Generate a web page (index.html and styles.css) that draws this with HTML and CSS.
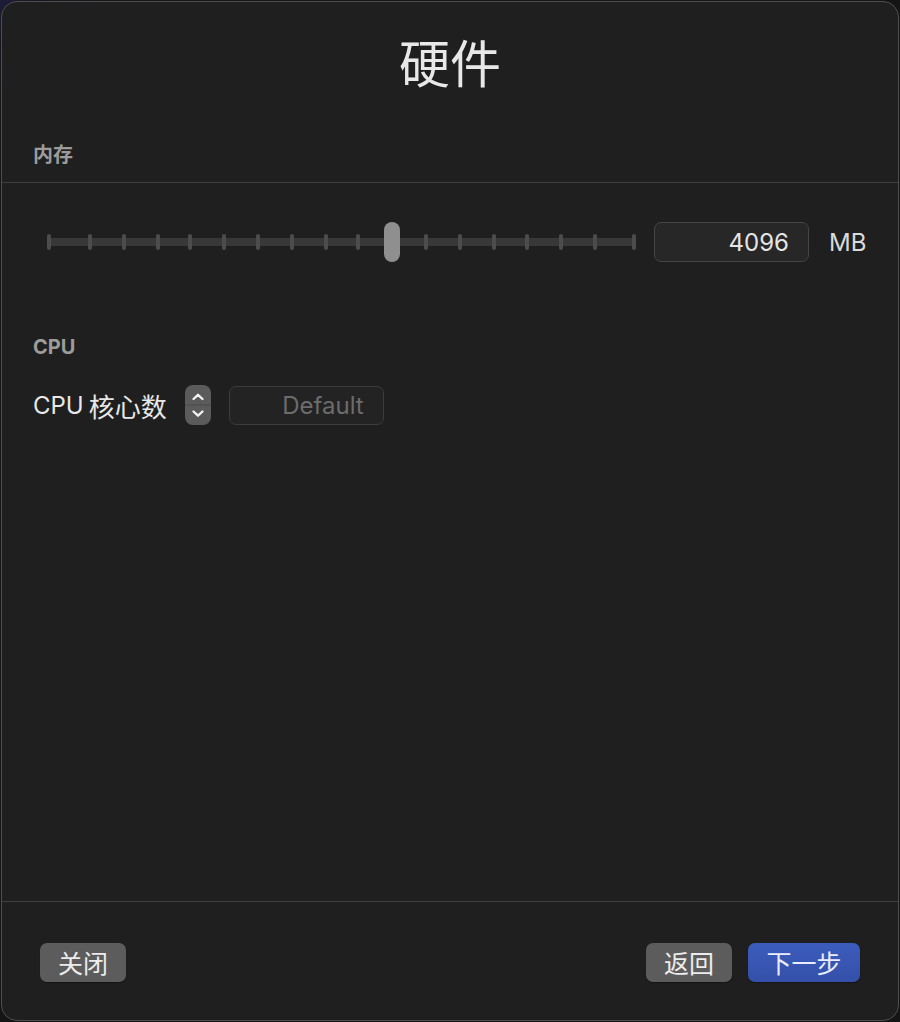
FILE: index.html
```html
<!DOCTYPE html>
<html lang="zh-CN">
<head>
<meta charset="utf-8">
<title>硬件</title>
<link rel="stylesheet" href="styles.css">
</head>
<body>
<div class="window">
  <main class="content">
    <h1 class="title">硬件</h1>

    <div class="section-label">内存</div>
    <div class="divider"></div>

    <div class="memory-row">
      <div class="slider">
        <div class="track"></div>
        <span class="tick" style="left:-1px"></span>
        <span class="tick" style="left:40px"></span>
        <span class="tick" style="left:74px"></span>
        <span class="tick" style="left:108px"></span>
        <span class="tick" style="left:140px"></span>
        <span class="tick" style="left:174px"></span>
        <span class="tick" style="left:208px"></span>
        <span class="tick" style="left:242px"></span>
        <span class="tick" style="left:276px"></span>
        <span class="tick" style="left:308px"></span>
        <span class="tick" style="left:342px"></span>
        <span class="tick" style="left:376px"></span>
        <span class="tick" style="left:410px"></span>
        <span class="tick" style="left:444px"></span>
        <span class="tick" style="left:477px"></span>
        <span class="tick" style="left:511px"></span>
        <span class="tick" style="left:545px"></span>
        <span class="tick" style="left:584px"></span>
        <span class="knob" style="left:336px"></span>
      </div>
      <div class="field field-memory">4096</div>
      <span class="unit">MB</span>
    </div>

    <div class="section-label cpu-label">CPU</div>

    <div class="cpu-row">
      <span class="row-label">CPU<span class="row-label-cjk">核心数</span></span>
      <div class="stepper">
        <svg class="chev" width="26" height="40" viewBox="0 0 26 40">
          <path d="M8.5 14 L13 9.8 L17.5 14" fill="none" stroke="#f4f4f4" stroke-width="2.3" stroke-linecap="round" stroke-linejoin="round"/>
          <line x1="0" y1="20" x2="26" y2="20" stroke="#4a4a4a" stroke-width="1"/>
          <path d="M8.5 26.5 L13 30.7 L17.5 26.5" fill="none" stroke="#f4f4f4" stroke-width="2.3" stroke-linecap="round" stroke-linejoin="round"/>
        </svg>
      </div>
      <div class="field field-cpu">Default</div>
    </div>
  </main>

  <footer class="footer">
    <button class="btn">关闭</button>
    <div class="footer-right">
      <button class="btn">返回</button>
      <button class="btn btn-primary">下一步</button>
    </div>
  </footer>
</div>
</body>
</html>
```

FILE: styles.css
```css
* {
  box-sizing: border-box;
}

html, body {
  margin: 0;
  padding: 0;
}

body {
  width: 900px;
  height: 1022px;
  background: #141414;
  background-image: linear-gradient(135deg, #1d1d3a 0px, #161620 30px, #151515 80px);
  font-family: Inter, "Noto Sans CJK SC", sans-serif;
  color: #e6e6e6;
  padding: 1px 1px 1px 1px;
}

.window {
  width: 898px;
  height: 1020px;
  border: 1px solid #4e4e4e;
  border-radius: 16px;
  background: #1f1f1f;
  display: flex;
  flex-direction: column;
  overflow: hidden;
}

.content {
  flex: 1;
  display: flex;
  flex-direction: column;
}

.title {
  margin: 0;
  padding-top: 28px;
  font-family: "Noto Sans CJK SC", sans-serif;
  font-weight: 400;
  font-size: 51px;
  line-height: 62px;
  text-align: center;
  color: #e8e8e8;
}

.section-label {
  margin-top: 51px;
  padding-left: 31px;
  font-family: Inter, "Noto Sans CJK SC", sans-serif;
  font-weight: 700;
  font-size: 20px;
  line-height: 24px;
  color: #9c9c9c;
}

.divider {
  margin-top: 15px;
  height: 1px;
  background: #3e3e3e;
}

.memory-row {
  margin-top: 39px;
  height: 40px;
  display: flex;
  align-items: center;
  padding-left: 46px;
}

.slider {
  position: relative;
  width: 588px;
  height: 40px;
}

.track {
  position: absolute;
  left: 0;
  right: 0;
  top: 16px;
  height: 8px;
  background: #383838;
  border-radius: 2px;
}

.tick {
  position: absolute;
  top: 12px;
  width: 4px;
  height: 16px;
  border-radius: 2px;
  background: #4c4c4c;
}

.knob {
  position: absolute;
  top: 0;
  width: 16px;
  height: 40px;
  border-radius: 8px;
  background: #8f8f8f;
}

.field {
  height: 40px;
  border: 1px solid #454545;
  border-radius: 7px;
  background: #272727;
  font-family: Inter, sans-serif;
  font-size: 24px;
  line-height: 39px;
  text-align: right;
  padding-right: 19px;
}

.field-memory {
  margin-left: 18px;
  width: 155px;
  color: #e4e4e4;
}

.unit {
  margin-left: 20px;
  font-size: 24px;
  color: #dadada;
}

.cpu-label {
  margin-top: 73px;
}

.cpu-row {
  margin-top: 26px;
  height: 40px;
  display: flex;
  align-items: center;
  padding-left: 31px;
}

.row-label {
  font-family: Inter, "Noto Sans CJK SC", sans-serif;
  font-size: 24px;
  color: #e8e8e8;
  display: flex;
  align-items: center;
}

.row-label-cjk {
  font-family: "Noto Sans CJK SC", sans-serif;
  font-size: 26px;
  margin-left: 5px;
}

.stepper {
  margin-left: 18px;
  width: 26px;
  height: 40px;
  border-radius: 8px;
  background: #5b5b5b;
  overflow: hidden;
}

.chev {
  display: block;
}

.field-cpu {
  margin-left: 18px;
  width: 155px;
  height: 39px;
  line-height: 37px;
  background: #232323;
  border-color: #3c3c3c;
  color: #6c6c6c;
}

.footer {
  flex: none;
  height: 119px;
  border-top: 1px solid #3e3e3e;
  padding: 41px 38px 0 38px;
  display: flex;
  justify-content: space-between;
  align-items: flex-start;
}

.footer-right {
  display: flex;
  gap: 16px;
}

.btn {
  height: 39px;
  min-width: 86px;
  padding: 0 16px;
  border: none;
  border-radius: 7px;
  background: #5c5c5c;
  color: #ececec;
  font-family: "Noto Sans CJK SC", sans-serif;
  font-size: 25px;
  line-height: 39px;
  box-shadow: 0 1px 1px rgba(0, 0, 0, 0.35);
}

.btn-primary {
  min-width: 112px;
  background: linear-gradient(#3c5cbd, #3450a8);
  color: #e9edff;
}
```
